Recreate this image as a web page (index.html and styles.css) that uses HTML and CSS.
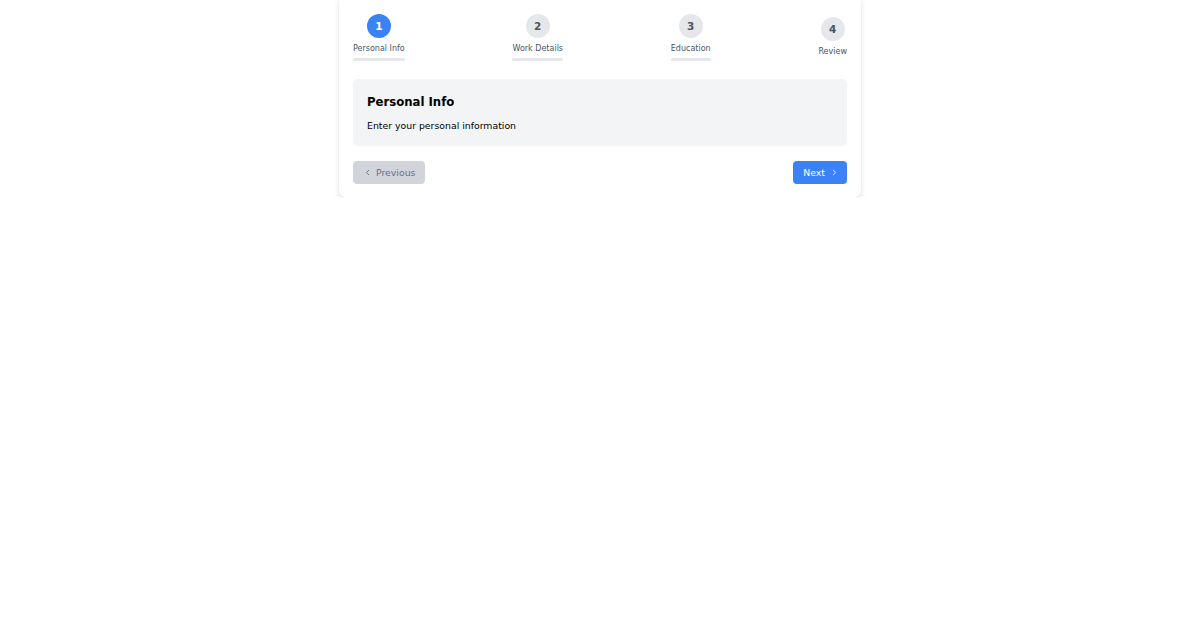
FILE: index.html
```html
<!DOCTYPE html>
<html>
<head>
<meta charset="utf-8">
<link rel="stylesheet" href="styles.css">
</head>
<body>
<div class="card">
  <div class="steps">
    <div class="step">
      <div class="circle active">1</div>
      <div class="label">Personal Info</div>
      <div class="bar"></div>
    </div>
    <div class="step">
      <div class="circle">2</div>
      <div class="label">Work Details</div>
      <div class="bar"></div>
    </div>
    <div class="step">
      <div class="circle">3</div>
      <div class="label">Education</div>
      <div class="bar"></div>
    </div>
    <div class="step">
      <div class="circle">4</div>
      <div class="label">Review</div>
    </div>
  </div>
  <div class="panel">
    <div class="panel-title">Personal Info</div>
    <div class="panel-desc">Enter your personal information</div>
  </div>
  <div class="actions">
    <button class="btn btn-prev" type="button">
      <svg class="chev" viewBox="0 0 24 24" width="9" height="9"><path d="M15 18l-6-6 6-6" fill="none" stroke="currentColor" stroke-width="2.5" stroke-linecap="round" stroke-linejoin="round"/></svg>
      <span>Previous</span>
    </button>
    <button class="btn btn-next" type="button">
      <span>Next</span>
      <svg class="chev" viewBox="0 0 24 24" width="9" height="9"><path d="M9 18l6-6-6-6" fill="none" stroke="currentColor" stroke-width="2.5" stroke-linecap="round" stroke-linejoin="round"/></svg>
    </button>
  </div>
</div>
</body>
</html>
```

FILE: styles.css
```css
html, body {
  margin: 0;
  padding: 0;
  background: #ffffff;
  font-family: "DejaVu Sans", sans-serif;
}

.card {
  width: 522px;
  box-sizing: border-box;
  margin: -6px auto 0;
  padding: 19.5px 14px 13px;
  background: #ffffff;
  border-radius: 6px;
  box-shadow: 0 4px 6px -1px rgba(0, 0, 0, 0.14), 0 2px 4px -2px rgba(0, 0, 0, 0.14);
}

.steps {
  display: flex;
  justify-content: space-between;
  align-items: center;
  margin-bottom: 18.5px;
}

.step {
  display: flex;
  flex-direction: column;
  align-items: center;
}

.circle {
  width: 24px;
  height: 24px;
  border-radius: 50%;
  background: #e5e7eb;
  color: #4b5563;
  font-size: 10.5px;
  font-weight: bold;
  display: flex;
  align-items: center;
  justify-content: center;
}

.circle.active {
  background: #3b82f6;
  color: #ffffff;
}

.label {
  margin-top: 5px;
  font-size: 8px;
  line-height: 12px;
  color: #4b5563;
  white-space: nowrap;
}

.bar {
  margin-top: 3px;
  width: 100%;
  height: 3px;
  border-radius: 2px;
  background: #e5e7eb;
}

.panel {
  background: #f3f4f6;
  border-radius: 5px;
  padding: 15px 14px 13px;
}

.panel-title {
  font-size: 11.7px;
  font-weight: bold;
  line-height: 16px;
  color: #000000;
}

.panel-desc {
  margin-top: 9px;
  font-size: 9.33px;
  line-height: 14px;
  color: #000000;
  font-weight: normal;
}

.actions {
  margin-top: 15px;
  display: flex;
  justify-content: space-between;
}

.btn {
  height: 23px;
  border: none;
  border-radius: 4px;
  font-family: "DejaVu Sans", sans-serif;
  font-size: 9.33px;
  font-weight: normal;
  display: flex;
  align-items: center;
  gap: 4px;
  cursor: pointer;
}

.btn-prev {
  background: #d1d5db;
  color: #6b7280;
  padding: 0 10px 0 10px;
}

.btn-next {
  background: #3b82f6;
  color: #ffffff;
  padding: 0 8px 0 10px;
  gap: 5px;
}

.chev {
  display: block;
}
```
